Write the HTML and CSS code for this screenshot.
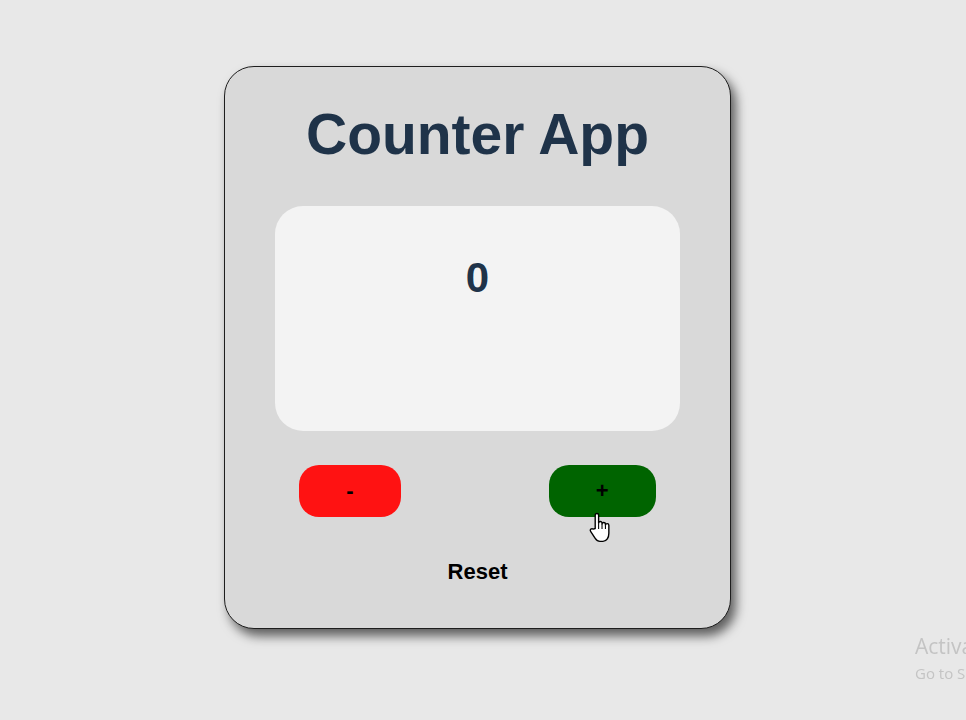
FILE: index.html
```html
<!DOCTYPE html>
<html lang="en">
<head>
<meta charset="utf-8">
<title>Counter App</title>
<link rel="stylesheet" href="styles.css">
</head>
<body>
<main class="page">
  <section class="card">
    <h1 class="title">Counter App</h1>
    <div class="display">
      <div class="value">0</div>
    </div>
    <div class="controls">
      <button class="btn btn-minus">-</button>
      <button class="btn btn-plus">+</button>
    </div>
    <button class="reset">Reset</button>
  </section>
</main>
<svg class="cursor" width="24" height="32" viewBox="0 0 22 30" aria-hidden="true">
  <path d="M6.5 15.5 V3 a1.6 1.6 0 0 1 3.2 0 V10.5 a1.6 1.6 0 0 1 3.2 0 V11.5 a1.6 1.6 0 0 1 3.2 0 V12.5 a1.6 1.6 0 0 1 3.2 0 V20 c0 4-2 7.5-5.5 7.5 H11 c-2.2 0-3.3-1-4.5-2.8 L2.2 18.2 a1.6 1.6 0 0 1 2.4-2.1 Z" fill="#fff" stroke="#000" stroke-width="1.3" stroke-linejoin="round"/>
  <path d="M9.7 11 V16 M12.9 11.8 V16 M16.1 12.8 V16" stroke="#000" stroke-width="1" fill="none"/>
</svg>
<div class="watermark">
  <div class="wm-title">Activate Windows</div>
  <div class="wm-sub">Go to Settings to activate Windows.</div>
</div>
</body>
</html>
```
FILE: styles.css
```css
html {
  overflow: hidden;
}

body {
  margin: 0;
  height: 720px;
  background: #e8e8e8;
  font-family: "Liberation Sans", Arial, sans-serif;
}

.page {
  display: flex;
  justify-content: center;
  padding-top: 66px;
  padding-right: 11px;
}

.card {
  box-sizing: border-box;
  width: 507px;
  border: 1px solid #1e1e1e;
  border-radius: 30px;
  background: #d9d9d9;
  box-shadow: 5px 7px 11px rgba(0, 0, 0, 0.6);
  display: flex;
  flex-direction: column;
  align-items: center;
  padding: 35px 50px 44px;
}

.title {
  margin: 0;
  font-size: 57px;
  line-height: 1.15;
  font-weight: bold;
  color: #1f3349;
}

.display {
  box-sizing: border-box;
  width: 405px;
  height: 225px;
  margin-top: 38px;
  padding-top: 48px;
  background: #f3f3f3;
  border-radius: 28px;
  text-align: center;
}

.value {
  font-size: 42px;
  line-height: 1.15;
  font-weight: bold;
  color: #1f3349;
}

.controls {
  box-sizing: border-box;
  width: 405px;
  margin-top: 34px;
  padding: 0 24px;
  display: flex;
  justify-content: space-between;
}

.btn {
  height: 52px;
  border: none;
  border-radius: 20px;
  padding: 0 47.3px;
  font-family: "Liberation Sans", Arial, sans-serif;
  font-size: 22px;
  font-weight: bold;
  color: #000;
}

.btn-minus {
  background: #ff1212;
}

.btn-plus {
  background: #006400;
}

.reset {
  margin-top: 42px;
  padding: 0;
  border: none;
  background: none;
  font-family: "Liberation Sans", Arial, sans-serif;
  font-size: 22px;
  line-height: 1.15;
  font-weight: bold;
  color: #000;
}

.cursor {
  position: fixed;
  left: 588px;
  top: 512px;
}

.watermark {
  position: fixed;
  left: 915px;
  top: 632px;
  white-space: nowrap;
  font-family: "Open Sans", "Noto Sans", sans-serif;
  color: #c4c4c4;
}

.wm-title {
  font-size: 21px;
  line-height: 1.362;
}

.wm-sub {
  margin-top: 2px;
  font-size: 15px;
  line-height: 1.362;
}
```
